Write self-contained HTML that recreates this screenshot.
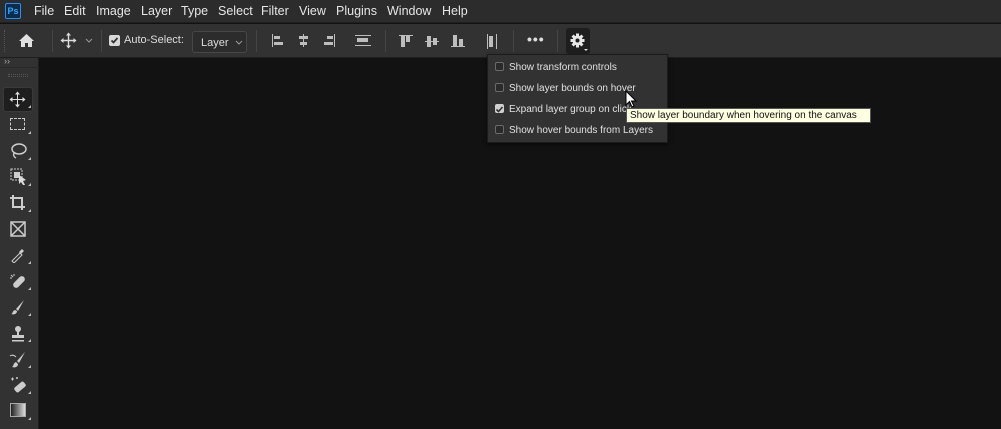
<!DOCTYPE html>
<html><head><style>
*{margin:0;padding:0;box-sizing:border-box}
body{width:1001px;height:429px;overflow:hidden;background:#121212;font-family:"Liberation Sans",sans-serif;position:relative;color:#ddd}
.menu{position:absolute;left:0;top:0;width:1001px;height:23px;background:#2c2c2c;border-bottom:1px solid #1f1f1f}
.menu span{position:absolute;top:4px;font-size:12.5px;color:#e6e6e6}
.ps{position:absolute;left:5px;top:3px;width:16px;height:16px;background:#0b2c4c;border:1px solid #2b8ef0;border-radius:2px;color:#31a8ff;font-size:9px;font-weight:bold;text-align:center;line-height:14px}
.opt{position:absolute;left:0;top:24px;width:1001px;height:34px;background:#323232;border-bottom:1px solid #1e1e1e}
.sep{position:absolute;top:30px;width:1px;height:22px;background:#454545}
.left{position:absolute;left:0;top:58px;width:39px;height:371px;background:#323232;border-right:1px solid #1e1e1e}
.tri{position:absolute;width:0;height:0;border-left:3px solid transparent;border-bottom:3px solid #bbb}
.dd{position:absolute;left:487px;top:54px;width:181px;height:89px;background:#323232;border:1px solid #1c1c1c;box-shadow:0 2px 4px rgba(0,0,0,.5)}
.it{position:absolute;left:7px;font-size:10px;color:#e0e0e0;white-space:nowrap}
.cb{display:inline-block;width:9px;height:9px;border:1px solid #6a6a6a;border-radius:2px;vertical-align:-1px;margin-right:5px;background:#2a2a2a}
.cb.on{background:#cfcfcf;border-color:#cfcfcf}
.tip{position:absolute;left:626px;top:108px;width:245px;height:15px;background:#ffffe1;border:1px solid #555;color:#111;font-size:10px;padding-left:3px;line-height:13px}
.g{position:absolute;background:#bdbdbd}
</style></head><body>
<div class="menu">
<div class="ps">Ps</div>
<span style="left:34px">File</span><span style="left:64px">Edit</span><span style="left:96px">Image</span><span style="left:141px">Layer</span><span style="left:181px">Type</span><span style="left:218px">Select</span><span style="left:261px">Filter</span><span style="left:299px">View</span><span style="left:336px">Plugins</span><span style="left:387px">Window</span><span style="left:442px">Help</span>
</div>
<div class="opt"></div>
<div style="position:absolute;left:4px;top:30px;width:2px;height:22px;border-left:1px dotted #555"></div>
<svg style="position:absolute;left:18px;top:33px" width="17" height="15" viewBox="0 0 17 15"><path d="M8.5 1L1 8h2v6h4v-4h3v4h4V8h2z" fill="#e0e0e0"/></svg>
<div class="sep" style="left:52px"></div>
<svg style="position:absolute;left:60px;top:32px" width="17" height="17" viewBox="0 0 17 17" stroke="#ddd" fill="#ddd"><path d="M8.5 2v13M2 8.5h13" stroke-width="1.4"/><path d="M8.5 0.5l-2.5 3h5zM8.5 16.5l-2.5-3h5zM0.5 8.5l3-2.5v5zM16.5 8.5l-3-2.5v5z" stroke="none"/></svg>
<svg style="position:absolute;left:85px;top:38px" width="8" height="5"><path d="M1 1l3 3 3-3" stroke="#999" fill="none"/></svg>
<div class="sep" style="left:101px"></div>
<div style="position:absolute;left:109px;top:35px;width:11px;height:11px;background:#d8d8d8;border-radius:2px"></div>
<svg style="position:absolute;left:109px;top:35px" width="11" height="11"><path d="M2.5 5.5l2 2 4-4.5" stroke="#323232" stroke-width="1.8" fill="none"/></svg>
<span style="position:absolute;left:124px;top:34px;font-size:11px;color:#ddd">Auto-Select:</span>
<div style="position:absolute;left:192px;top:31px;width:55px;height:22px;border:1px solid #474747;border-radius:3px;background:#2c2c2c"></div>
<span style="position:absolute;left:201px;top:37px;font-size:11px;color:#ddd">Layer</span>
<svg style="position:absolute;left:235px;top:40px" width="8" height="5"><path d="M1 1l3 3 3-3" stroke="#999" fill="none"/></svg>
<div class="sep" style="left:256px"></div>
<div class="g" style="left:272px;top:34px;width:1px;height:13px"></div><div class="g" style="left:274px;top:36px;width:6px;height:3px"></div><div class="g" style="left:274px;top:42px;width:9px;height:3px"></div>
<div class="g" style="left:303px;top:34px;width:1px;height:13px"></div><div class="g" style="left:299px;top:36px;width:9px;height:3px"></div><div class="g" style="left:300px;top:42px;width:7px;height:3px"></div>
<div class="g" style="left:334px;top:34px;width:1px;height:13px"></div><div class="g" style="left:327px;top:36px;width:6px;height:3px"></div><div class="g" style="left:324px;top:42px;width:9px;height:3px"></div>
<div class="g" style="left:355px;top:35px;width:16px;height:1px"></div><div class="g" style="left:357px;top:38px;width:11px;height:4px"></div><div class="g" style="left:355px;top:45px;width:16px;height:1px"></div>
<div class="sep" style="left:385px"></div>
<div class="g" style="left:399px;top:35px;width:14px;height:1px"></div><div class="g" style="left:401px;top:36px;width:4px;height:11px"></div><div class="g" style="left:406px;top:36px;width:4px;height:6px"></div>
<div class="g" style="left:425px;top:41px;width:14px;height:1px"></div><div class="g" style="left:427px;top:36px;width:4px;height:11px"></div><div class="g" style="left:433px;top:38px;width:4px;height:7px"></div>
<div class="g" style="left:451px;top:46px;width:14px;height:1px"></div><div class="g" style="left:453px;top:35px;width:4px;height:11px"></div><div class="g" style="left:459px;top:39px;width:4px;height:7px"></div>
<div class="g" style="left:487px;top:34px;width:1px;height:15px"></div><div class="g" style="left:489px;top:36px;width:4px;height:11px"></div><div class="g" style="left:496px;top:34px;width:1px;height:15px"></div>
<div class="sep" style="left:513px"></div>
<span style="position:absolute;left:527px;top:31px;font-size:14px;color:#ddd;letter-spacing:1px;font-weight:bold">•••</span>
<div class="sep" style="left:557px"></div>
<div style="position:absolute;left:566px;top:28px;width:24px;height:26px;background:#1e1e1e;border-radius:3px"></div>
<svg style="position:absolute;left:570px;top:33px" width="15" height="15" viewBox="0 0 15 15"><g fill="#e6e6e6"><circle cx="7.5" cy="7.5" r="5"/><rect x="6" y="0.5" width="3" height="14"/><rect x="0.5" y="6" width="14" height="3"/><rect x="6" y="0.5" width="3" height="14" transform="rotate(45 7.5 7.5)"/><rect x="6" y="0.5" width="3" height="14" transform="rotate(-45 7.5 7.5)"/></g><circle cx="7.5" cy="7.5" r="2" fill="#1e1e1e"/></svg>
<div style="position:absolute;left:584px;top:49px;width:0;height:0;border-left:2px solid transparent;border-right:2px solid transparent;border-top:2px solid #ddd"></div>

<div class="left"></div>
<span style="position:absolute;left:4px;top:56px;font-size:9px;color:#aaa">››</span>
<div style="position:absolute;left:0;top:67px;width:39px;height:1px;background:#282828"></div>
<div style="position:absolute;left:8px;top:74px;width:20px;height:3px;border-top:1px dotted #555;border-bottom:1px dotted #555"></div>
<div style="position:absolute;left:3px;top:87px;width:30px;height:25px;background:#1e1e1e;border-radius:3px;border:1px solid #3a3a3a"></div>
<svg style="position:absolute;left:9px;top:91px" width="17" height="17" viewBox="0 0 17 17" fill="#e0e0e0"><path d="M8 2h1v13H8zM2 8h13v1H2z"/><path d="M8.5 0.5l-2.5 3h5zM8.5 16.5l-2.5-3h5zM0.5 8.5l3-2.5v5zM16.5 8.5l-3-2.5v5z"/></svg>
<div style="position:absolute;left:10px;top:118px;width:15px;height:12px;border:1.5px dashed #ccc"></div>
<svg style="position:absolute;left:9px;top:142px" width="18" height="18"><ellipse cx="10" cy="7" rx="7" ry="5" stroke="#ccc" stroke-width="1.5" fill="none"/><path d="M5 11c-1 2 0 4 2 5" stroke="#ccc" stroke-width="1.5" fill="none"/></svg>
<svg style="position:absolute;left:10px;top:168px" width="18" height="18"><rect x="1" y="1" width="11" height="11" stroke="#ccc" stroke-dasharray="2 1" fill="none"/><rect x="4" y="4" width="6" height="6" fill="#ccc"/><path d="M9 7l7 5-3 1 2 4-2 0-2-3-2 2z" fill="#ddd"/></svg>
<svg style="position:absolute;left:9px;top:194px" width="18" height="18"><path d="M4 1v12h12M1 4h12v12" stroke="#ccc" stroke-width="2" fill="none"/></svg>
<svg style="position:absolute;left:10px;top:221px" width="16" height="16"><rect x="1" y="1" width="14" height="14" stroke="#ccc" stroke-width="1.5" fill="none"/><path d="M1 1l14 14M15 1L1 15" stroke="#ccc" stroke-width="1.5"/></svg>
<svg style="position:absolute;left:10px;top:247px" width="16" height="16"><path d="M2 14l8-8 2 2-8 8z" stroke="#ccc" fill="none"/><path d="M9 5l3-3 2 2-3 3z" fill="#ccc"/></svg>
<svg style="position:absolute;left:9px;top:273px" width="18" height="18"><rect x="3" y="6" width="14" height="6" rx="3" transform="rotate(-45 10 9)" fill="#ccc"/><path d="M2 2l2 2M5 1v2M1 5h2" stroke="#ccc"/></svg>
<svg style="position:absolute;left:10px;top:299px" width="16" height="16"><path d="M14 1L6 10l2 2z" fill="#ccc"/><path d="M5 11c-3 1-2 4-4 4 3 1 6 0 6-3z" fill="#ccc"/></svg>
<svg style="position:absolute;left:9px;top:325px" width="18" height="17"><circle cx="9" cy="4" r="3" fill="#ccc"/><rect x="8" y="6" width="2" height="5" fill="#ccc"/><rect x="3" y="10" width="12" height="3" fill="#ccc"/><rect x="3" y="15" width="12" height="1.5" fill="#ccc"/></svg>
<svg style="position:absolute;left:9px;top:351px" width="18" height="17"><path d="M16 1L8 10l2 2z" fill="#ccc"/><path d="M7 11c-3 1-2 4-4 5 3 1 6 0 6-3z" fill="#ccc"/><path d="M1 5c3-2 5 0 6 1" stroke="#ccc" fill="none"/></svg>
<svg style="position:absolute;left:9px;top:377px" width="18" height="17"><rect x="5" y="7" width="12" height="6" rx="2" transform="rotate(-40 11 10)" fill="#ccc"/><path d="M2 2h3M3.5 0.5v3M7 1h2M8 0v2" stroke="#ccc"/></svg>
<div style="position:absolute;left:10px;top:403px;width:16px;height:14px;border:1px solid #aaa;background:linear-gradient(90deg,#222,#ddd)"></div>
<div class="tri" style="left:28px;top:105px"></div><div class="tri" style="left:28px;top:131px"></div><div class="tri" style="left:28px;top:157px"></div><div class="tri" style="left:28px;top:183px"></div><div class="tri" style="left:28px;top:209px"></div><div class="tri" style="left:28px;top:261px"></div><div class="tri" style="left:28px;top:287px"></div><div class="tri" style="left:28px;top:313px"></div><div class="tri" style="left:28px;top:339px"></div><div class="tri" style="left:28px;top:365px"></div><div class="tri" style="left:28px;top:391px"></div><div class="tri" style="left:28px;top:417px"></div>

<div class="dd">
<div class="it" style="top:7px"><span class="cb"></span>Show transform controls</div>
<div class="it" style="top:28px"><span class="cb"></span>Show layer bounds on hover</div>
<div class="it" style="top:49px"><span class="cb on"></span>Expand layer group on click</div>
<div class="it" style="top:70px"><span class="cb"></span>Show hover bounds from Layers</div>
</div>
<svg style="position:absolute;left:495px;top:105px" width="9" height="9"><path d="M1.5 4.5l2 2 4-4.5" stroke="#323232" stroke-width="1.6" fill="none"/></svg>
<div class="tip">Show layer boundary when hovering on the canvas</div>
<svg style="position:absolute;left:625px;top:90px" width="12" height="18"><path d="M1 1v14l3.5-3.5 2.5 5.5 2-1-2.5-5H11z" fill="#fff" stroke="#000"/></svg>
</body></html>
